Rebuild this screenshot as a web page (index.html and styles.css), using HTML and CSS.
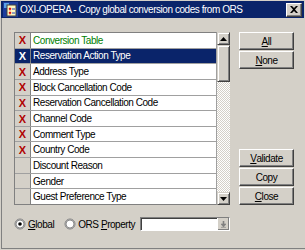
FILE: index.html
```html
<!DOCTYPE html>
<html>
<head>
<meta charset="utf-8">
<link rel="stylesheet" href="styles.css">
</head>
<body>
<div class="window">
  <div class="titlebar">
    <svg class="app-icon" width="15" height="15" viewBox="0 0 15 15">
      <rect x="0" y="0" width="15" height="15" fill="#1c3c9c"/>
      <rect x="1" y="1" width="5" height="5" fill="#5aa0e8"/>
      <rect x="4" y="3" width="9" height="11" fill="#fff8c0" stroke="#404040" stroke-width="1"/>
      <path d="M6 6 L8 8 M8 6 L6 8" stroke="#e01010" stroke-width="1.2"/>
      <path d="M6 10 L8 12 M8 10 L6 12" stroke="#e01010" stroke-width="1.2"/>
      <path d="M9 7 H12 M9 11 H12" stroke="#2040c0" stroke-width="1"/>
    </svg>
    <span class="title">OXI-OPERA - Copy global conversion codes from ORS</span>
    <span class="close-btn">
      <svg width="8" height="7" viewBox="0 0 8 7"><path d="M0 0 H2 L4 2 L6 0 H8 L5 3.5 L8 7 H6 L4 5 L2 7 H0 L3 3.5 Z" fill="#000"/></svg>
    </span>
  </div>
  <div class="client">
    <div class="main">
      <div class="list">
        <div class="grid">
          <div class="row header"><span class="chk">X</span><span class="cell">Conversion Table</span></div>
          <div class="row selected"><span class="chk">X</span><span class="cell">Reservation Action Type</span></div>
          <div class="row"><span class="chk">X</span><span class="cell">Address Type</span></div>
          <div class="row"><span class="chk">X</span><span class="cell">Block Cancellation Code</span></div>
          <div class="row"><span class="chk">X</span><span class="cell">Reservation Cancellation Code</span></div>
          <div class="row"><span class="chk">X</span><span class="cell">Channel Code</span></div>
          <div class="row"><span class="chk">X</span><span class="cell">Comment Type</span></div>
          <div class="row"><span class="chk">X</span><span class="cell">Country Code</span></div>
          <div class="row"><span class="chk"></span><span class="cell">Discount Reason</span></div>
          <div class="row"><span class="chk"></span><span class="cell">Gender</span></div>
          <div class="row"><span class="chk"></span><span class="cell">Guest Preference Type</span></div>
        </div>
        <div class="scrollbar">
          <div class="sb-btn">
            <svg width="7" height="4" viewBox="0 0 7 4"><path d="M3.5 0 L7 4 H0 Z" fill="#000"/></svg>
          </div>
          <div class="track">
            <div class="thumb"></div>
          </div>
          <div class="sb-btn">
            <svg width="7" height="4" viewBox="0 0 7 4"><path d="M0 0 H7 L3.5 4 Z" fill="#000"/></svg>
          </div>
        </div>
      </div>
      <div class="buttons">
        <div class="group">
          <div class="btn"><span class="u">A</span>ll</div>
          <div class="btn"><span class="u">N</span>one</div>
        </div>
        <div class="group">
          <div class="btn"><span class="u">V</span>alidate</div>
          <div class="btn">Copy</div>
          <div class="btn"><span class="u">C</span>lose</div>
        </div>
      </div>
    </div>
    <div class="options">
      <span class="radio-opt">
        <svg class="radio" width="12" height="12" viewBox="0 0 12 12">
          <circle cx="6" cy="6" r="5" fill="#fff" stroke="#808080" stroke-width="1"/>
          <circle cx="6" cy="6" r="4" fill="none" stroke="#404040" stroke-width="0.6"/>
          <circle cx="6" cy="6" r="1.8" fill="#000"/>
        </svg>
        <span><span class="u">G</span>lobal</span>
      </span>
      <span class="radio-opt second">
        <svg class="radio" width="12" height="12" viewBox="0 0 12 12">
          <circle cx="6" cy="6" r="5" fill="#fff" stroke="#808080" stroke-width="1"/>
          <circle cx="6" cy="6" r="4" fill="none" stroke="#404040" stroke-width="0.6"/>
        </svg>
        <span>ORS <span class="u">P</span>roperty</span>
      </span>
      <span class="combo">
        <span class="combo-field"></span>
        <span class="combo-btn">
          <svg width="5" height="7" viewBox="0 0 5 7"><path d="M2 0 H3 V3 H5 L2.5 6 L0 3 H2 Z M0 6.4 H5" fill="#808080" stroke="#808080" stroke-width="0.6"/></svg>
        </span>
      </span>
    </div>
  </div>
</div>
</body>
</html>
```

FILE: styles.css
```css
html, body {
  margin: 0;
  padding: 0;
}
body {
  width: 305px;
  height: 250px;
  background: #d4d0c8;
  font-family: "Liberation Sans", Arial, sans-serif;
  font-size: 10px;
  letter-spacing: -0.45px;
  color: #000;
  overflow: hidden;
}
.window {
  width: 305px;
  height: 250px;
  box-sizing: border-box;
  padding-top: 1px;
  display: flex;
  flex-direction: column;
}
.titlebar {
  height: 17px;
  margin: 0 1px;
  background: #0a246a;
  color: #fff;
  display: flex;
  align-items: center;
  padding-left: 2px;
}
.app-icon {
  flex: none;
  margin-right: 2px;
}
.title {
  flex: 1;
  min-width: 0;
  white-space: nowrap;
  overflow: hidden;
  font-size: 10px;
  letter-spacing: -0.45px;
  line-height: 17px;
}
.close-btn {
  flex: none;
  width: 14px;
  height: 12px;
  margin-right: 2px;
  background: #d4d0c8;
  border: 1px solid;
  border-color: #fff #404040 #404040 #fff;
  box-shadow: inset -1px -1px #808080;
  display: flex;
  align-items: center;
  justify-content: center;
}
.client {
  flex: 1;
  margin-left: 1px;
  border-left: 1px solid #808080;
  border-bottom: 1px solid #808080;
  margin-bottom: 1px;
  padding: 14px 0 0 12px;
}
.main {
  display: flex;
  gap: 9px;
  height: 173px;
}
.list {
  display: flex;
  width: 216px;
  height: 173px;
}
.grid {
  flex: 1;
  display: flex;
  flex-direction: column;
  border: 1px solid #808080;
  border-right: 1px solid #a0a0a0;
  background: #fff;
}
.row {
  flex: 1;
  display: flex;
  min-height: 0;
  border-top: 1px solid #a0a0a0;
}
.row:first-child {
  border-top: none;
}
.chk {
  width: 15px;
  flex: none;
  background: #d4d0c8;
  border-right: 1px solid #808080;
  color: #b00000;
  font-weight: bold;
  font-size: 11px;
  letter-spacing: 0;
  display: flex;
  align-items: center;
  justify-content: center;
}
.cell {
  flex: 1;
  display: flex;
  align-items: center;
  padding-left: 2px;
  white-space: nowrap;
  overflow: hidden;
}
.header .cell {
  color: #008000;
}
.selected .chk {
  background: #0a246a;
  color: #fff;
}
.selected .cell {
  background: #0a246a;
  color: #fff;
}
.scrollbar {
  width: 13px;
  flex: none;
  display: flex;
  flex-direction: column;
}
.sb-btn {
  height: 11px;
  background: #d4d0c8;
  border: 1px solid;
  border-color: #d4d0c8 #404040 #404040 #d4d0c8;
  box-shadow: inset 1px 1px #fff, inset -1px -1px #808080;
  display: flex;
  align-items: center;
  justify-content: center;
}
.track {
  flex: 1;
  background: repeating-conic-gradient(#fff 0 25%, #d4d0c8 0 50%) 0 0 / 2px 2px;
}
.thumb {
  height: 35px;
  background: #d4d0c8;
  border: 1px solid;
  border-color: #d4d0c8 #404040 #404040 #d4d0c8;
  box-shadow: inset 1px 1px #fff, inset -1px -1px #808080;
}
.buttons {
  width: 55px;
  display: flex;
  flex-direction: column;
  justify-content: space-between;
}
.group {
  display: flex;
  flex-direction: column;
  gap: 1px;
}
.btn {
  height: 16px;
  box-sizing: content-box;
  background: #d4d0c8;
  border: 1px solid;
  border-color: #fff #404040 #404040 #fff;
  box-shadow: inset -1px -1px #808080;
  display: flex;
  align-items: center;
  justify-content: center;
}
.u {
  text-decoration: underline;
}
.options {
  display: flex;
  align-items: center;
  height: 14px;
  margin-top: 12px;
}
.radio-opt {
  display: flex;
  align-items: center;
  gap: 2px;
}
.radio {
  flex: none;
}
.second {
  margin-left: 10px;
}
.combo {
  display: flex;
  margin-left: 5px;
  width: 90px;
  height: 14px;
  box-sizing: border-box;
  border: 1px solid;
  border-color: #808080 #fff #fff #808080;
  box-shadow: inset 1px 1px #404040;
  background: #fff;
}
.combo-field {
  flex: 1;
}
.combo-btn {
  width: 11px;
  background: #d4d0c8;
  border-left: 1px solid #fff;
  box-shadow: inset -1px -1px #808080;
  display: flex;
  align-items: center;
  justify-content: center;
}
```
